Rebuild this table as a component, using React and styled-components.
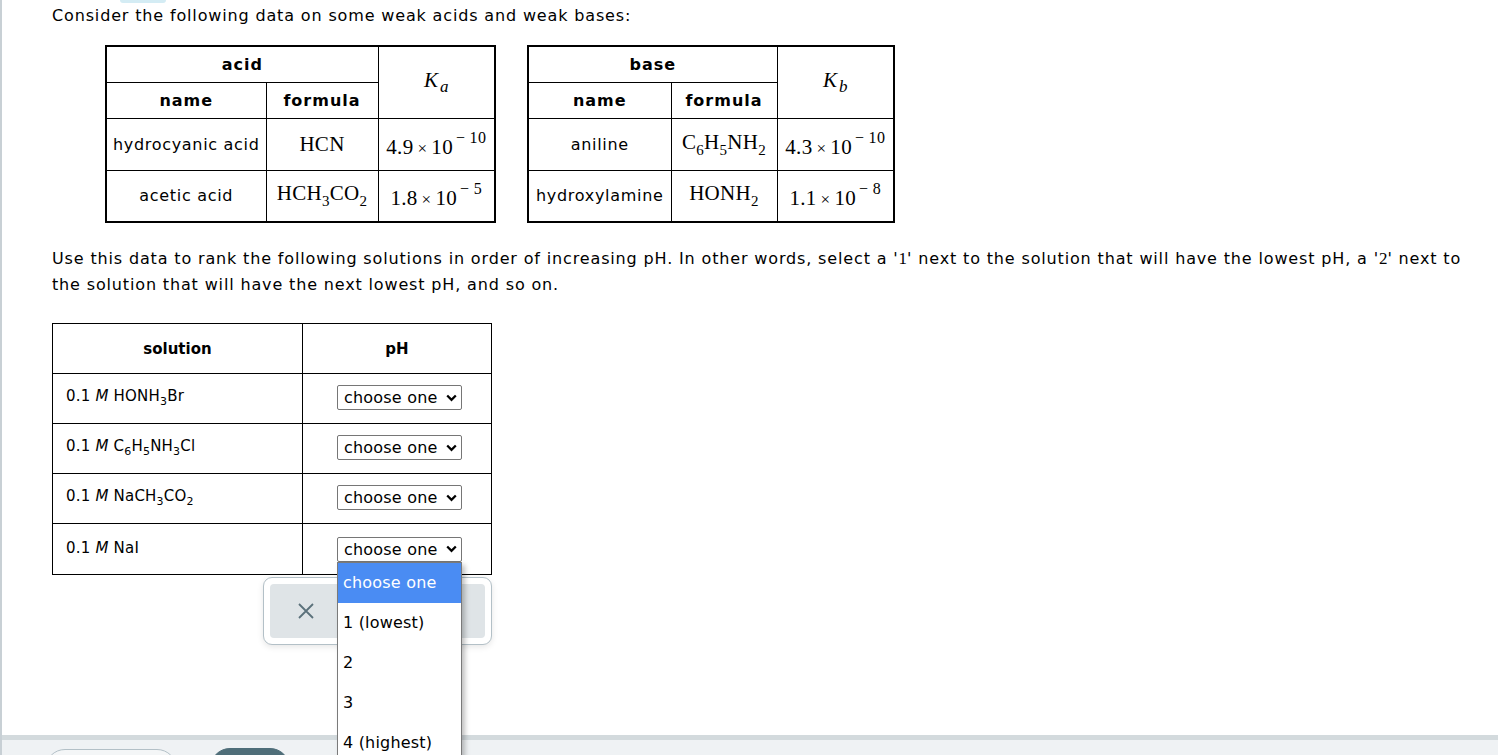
import styled, { createGlobalStyle } from "styled-components";

const GlobalStyle = createGlobalStyle`
  html, body {
    margin: 0;
    padding: 0;
    background: #fff;
  }
  body {
    font-family: "DejaVu Sans", Verdana, sans-serif;
    color: #000;
  }
`;

const Page = styled.div`
  height: 755px;
  display: flex;
  flex-direction: column;
  border-left: 2px solid #c8d0d5;
  overflow: hidden;
`;

const Content = styled.main`
  flex: 1;
  padding-left: 50px;
`;

const TopTab = styled.div`
  width: 46px;
  height: 3px;
  margin-left: 68px;
  background: #d4ecf4;
  border-radius: 0 0 8px 8px;
`;

const Lead = styled.p`
  margin: 0;
  font-size: 16px;
  line-height: 26px;
  letter-spacing: 0.85px;
`;

const TablesRow = styled.div`
  display: flex;
  gap: 31px;
  margin: 16px 0 0 53px;
`;

const DataTable = styled.table`
  table-layout: fixed;
  border-collapse: collapse;
  border: 2px solid #000;
  width: ${(p) => p.$width}px;
`;

const Col = styled.col`
  width: ${(p) => p.$w}px;
`;

const HeadRow = styled.tr`
  height: 36px;
`;

const BodyRow = styled.tr`
  height: 52px;
`;

const Th = styled.th`
  border: 1px solid #000;
  padding: 0;
  font-size: 16px;
  font-weight: bold;
  letter-spacing: 1px;
  text-align: center;
  vertical-align: middle;
`;

const Td = styled.td`
  border: 1px solid #000;
  padding: 0;
  font-size: 16px;
  letter-spacing: 0.7px;
  text-align: center;
  vertical-align: middle;
  white-space: nowrap;
`;

const Serif = styled.span`
  font-family: "Liberation Serif", "Times New Roman", serif;
  font-size: 21px;
  font-weight: normal;
  letter-spacing: 0.3px;
`;

const Ital = styled.span`
  font-family: "Liberation Serif", "Times New Roman", serif;
  font-style: italic;
  font-weight: normal;
  font-size: 21px;
  letter-spacing: 0;
`;

const Lower = styled.span`
  font-size: ${(p) => p.$size || 15}px;
  vertical-align: ${(p) => p.$drop || -6}px;
  margin-left: ${(p) => p.$gap || 0}px;
`;

const Raise = styled.span`
  font-size: 16px;
  vertical-align: 11px;
  margin-left: 3px;
`;

const Times = styled.span`
  margin: 0 4px;
  font-size: 17px;
`;

const Prompt = styled.p`
  margin: 23px 0 0;
  font-size: 16px;
  line-height: 26px;
  letter-spacing: 0.85px;
  max-width: 1420px;
`;

const Num = styled.span`
  font-family: "Liberation Serif", "Times New Roman", serif;
  font-size: 17px;
  line-height: 1;
  letter-spacing: 0;
`;

const SolTable = styled.table`
  margin-top: 25px;
  table-layout: fixed;
  border-collapse: collapse;
  border: 1px solid #000;
  width: 440px;
`;

const SolRow = styled.tr`
  height: ${(p) => p.$h || 50}px;
`;

const SolTh = styled.th`
  border: 1px solid #000;
  padding: 0;
  font-size: 15px;
  font-weight: bold;
  text-align: center;
`;

const SolTd = styled.td`
  border: 1px solid #000;
  padding: 0 0 2px 13px;
  font-size: 15px;
  vertical-align: middle;
  text-align: ${(p) => (p.$center ? "center" : "left")};
  ${(p) => p.$center && "padding-left: 5px;"}
`;

const Chem = styled.span`
  font-size: 15px;
  letter-spacing: 0.2px;
`;

const ChemSub = styled.span`
  font-size: 11px;
  vertical-align: -4px;
`;

const Molar = styled.i`
  font-style: italic;
`;

const Picker = styled.div`
  position: relative;
  display: inline-flex;
  align-items: center;
  justify-content: space-between;
  box-sizing: border-box;
  width: 125px;
  height: 25px;
  margin-top: ${(p) => (p.$open ? 2 : 0)}px;
  padding: 0 4px 0 6px;
  border: 1px solid #767676;
  border-radius: 2px;
  background: #fff;
  font-size: 16px;
  letter-spacing: 0.2px;
  text-align: left;
  color: #000;
`;

const Menu = styled.ul`
  position: absolute;
  top: 24px;
  left: -1px;
  z-index: 10;
  width: 125px;
  margin: 0;
  padding: 0;
  list-style: none;
  background: #fff;
  border: 1px solid #7a7a7a;
  box-sizing: border-box;
  box-shadow: 3px 3px 5px rgba(0, 0, 0, 0.25);
`;

const Option = styled.li`
  height: 40px;
  line-height: 40px;
  padding-left: 5px;
  font-size: 16px;
  background: ${(p) => (p.$active ? "#4a8cf3" : "#fff")};
  color: ${(p) => (p.$active ? "#fff" : "#000")};
`;

const Tools = styled.div`
  box-sizing: border-box;
  width: 229px;
  height: 68px;
  margin: 2px 0 0 211px;
  padding: 6px;
  border: 1px solid #b3c0c7;
  border-radius: 9px;
  background: #fff;
  box-shadow: 0 2px 6px rgba(0, 0, 0, 0.1);
`;

const ToolBar = styled.div`
  display: flex;
  height: 100%;
  background: #dfe4e7;
  border-radius: 4px;
`;

const ToolButton = styled.div`
  flex: 1;
  display: flex;
  align-items: center;
  justify-content: center;
  color: #5b717b;
`;

const Footer = styled.footer`
  box-sizing: border-box;
  flex-shrink: 0;
  height: 20px;
  display: flex;
  gap: 33px;
  padding: 9px 0 0 43px;
  border-top: 5px solid #d3dadd;
  background: #eff2f4;
`;

const Pill = styled.div`
  flex-shrink: 0;
  width: ${(p) => p.$w}px;
  height: 40px;
  margin-top: ${(p) => (p.$dark ? -1 : 0)}px;
  box-sizing: border-box;
  border-radius: 20px;
  border: 1px solid ${(p) => (p.$dark ? "#4f6e79" : "#b3c0c7")};
  background: ${(p) => (p.$dark ? "#4f6e79" : "#f4f6f7")};
`;

function Chevron() {
  return (
    <svg width="11" height="8" viewBox="0 0 11 8">
      <path d="M1.2 1.5 L5.5 5.8 L9.8 1.5" fill="none" stroke="#000" strokeWidth="2.3" />
    </svg>
  );
}

function Select({ open }) {
  return (
    <Picker $open={open}>
      choose one
      <Chevron />
      {open && (
        <Menu>
          <Option $active>choose one</Option>
          <Option>1 (lowest)</Option>
          <Option>2</Option>
          <Option>3</Option>
          <Option>4 (highest)</Option>
        </Menu>
      )}
    </Picker>
  );
}

function Power({ base, exp }) {
  return (
    <Serif>
      {base}
      <Times>×</Times>10
      <Raise>− {exp}</Raise>
    </Serif>
  );
}

const acids = [
  { name: "hydrocyanic acid", formula: <Serif>HCN</Serif>, k: ["4.9", "10"] },
  {
    name: "acetic acid",
    formula: (
      <Serif>
        HCH<Lower>3</Lower>CO<Lower>2</Lower>
      </Serif>
    ),
    k: ["1.8", "5"],
  },
];

const bases = [
  {
    name: "aniline",
    formula: (
      <Serif>
        C<Lower>6</Lower>H<Lower>5</Lower>NH<Lower>2</Lower>
      </Serif>
    ),
    k: ["4.3", "10"],
  },
  {
    name: "hydroxylamine",
    formula: (
      <Serif>
        HONH<Lower>2</Lower>
      </Serif>
    ),
    k: ["1.1", "8"],
  },
];

function ConstantTable({ title, letter, rows, cols }) {
  const width = cols.reduce((a, b) => a + b, 0);
  return (
    <DataTable $width={width}>
      <colgroup>
        {cols.map((w, i) => (
          <Col key={i} $w={w} />
        ))}
      </colgroup>
      <thead>
        <HeadRow>
          <Th colSpan={2}>{title}</Th>
          <Th rowSpan={2}>
            <Ital>
              K
              <Lower $size={17} $drop={-5} $gap={2}>
                {letter}
              </Lower>
            </Ital>
          </Th>
        </HeadRow>
        <HeadRow>
          <Th>name</Th>
          <Th>formula</Th>
        </HeadRow>
      </thead>
      <tbody>
        {rows.map((r) => (
          <BodyRow key={r.name}>
            <Td>{r.name}</Td>
            <Td>{r.formula}</Td>
            <Td>
              <Power base={r.k[0]} exp={r.k[1]} />
            </Td>
          </BodyRow>
        ))}
      </tbody>
    </DataTable>
  );
}

const solutions = [
  <>
    HONH<ChemSub>3</ChemSub>Br
  </>,
  <>
    C<ChemSub>6</ChemSub>H<ChemSub>5</ChemSub>NH<ChemSub>3</ChemSub>Cl
  </>,
  <>
    NaCH<ChemSub>3</ChemSub>CO<ChemSub>2</ChemSub>
  </>,
  <>NaI</>,
];

export default function App() {
  return (
    <>
      <GlobalStyle />
      <Page>
        <Content>
          <TopTab />
          <Lead>Consider the following data on some weak acids and weak bases:</Lead>

          <TablesRow>
            <ConstantTable title="acid" letter="a" rows={acids} cols={[160, 112, 117]} />
            <ConstantTable title="base" letter="b" rows={bases} cols={[143, 106, 117]} />
          </TablesRow>

          <Prompt>
            Use this data to rank the following solutions in order of increasing pH. In other words, select a '<Num>1</Num>'
            next to the solution that will have the lowest pH, a '<Num>2</Num>' next to the solution that will have the
            next lowest pH, and so on.
          </Prompt>

          <SolTable>
            <colgroup>
              <Col $w={250} />
              <Col $w={189} />
            </colgroup>
            <thead>
              <SolRow>
                <SolTh>solution</SolTh>
                <SolTh>pH</SolTh>
              </SolRow>
            </thead>
            <tbody>
              {solutions.map((s, i) => {
                const last = i === solutions.length - 1;
                return (
                  <SolRow key={i} $h={last ? 51 : 50}>
                    <SolTd>
                      <Chem>
                        0.1 <Molar>M</Molar> {s}
                      </Chem>
                    </SolTd>
                    <SolTd $center>
                      <Select open={last} />
                    </SolTd>
                  </SolRow>
                );
              })}
            </tbody>
          </SolTable>

          <Tools>
            <ToolBar>
              <ToolButton>
                <svg width="18" height="18" viewBox="0 0 18 18">
                  <path d="M2 2 L16 16 M16 2 L2 16" stroke="currentColor" strokeWidth="1.8" fill="none" />
                </svg>
              </ToolButton>
              <ToolButton />
              <ToolButton />
            </ToolBar>
          </Tools>
        </Content>

        <Footer>
          <Pill $w={132} />
          <Pill $w={80} $dark />
        </Footer>
      </Page>
    </>
  );
}
